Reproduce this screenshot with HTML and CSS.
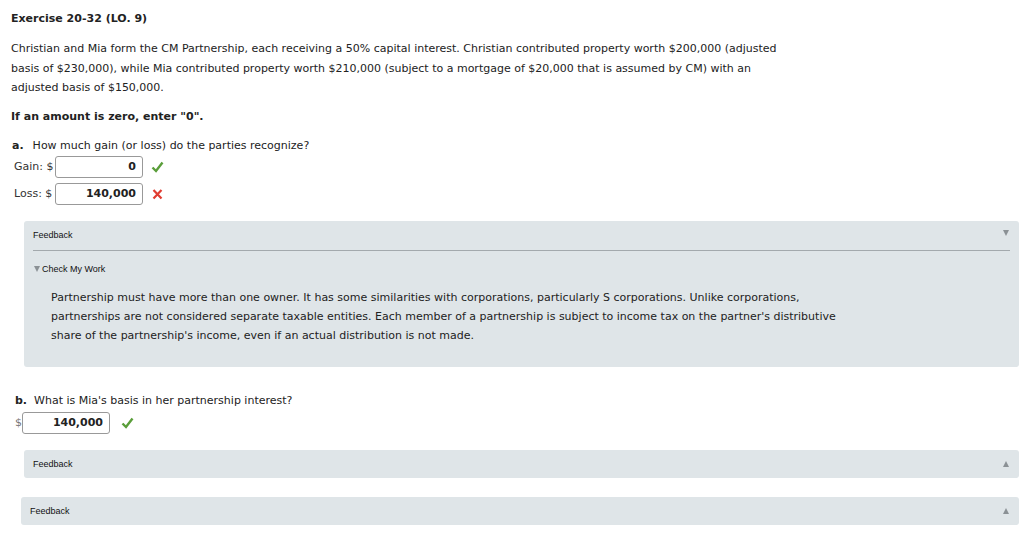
FILE: index.html
```html
<!DOCTYPE html>
<html>
<head>
<meta charset="utf-8">
<link rel="stylesheet" href="styles.css">
</head>
<body>
<div class="page">
  <div class="title">Exercise 20-32 (LO. 9)</div>
  <p class="intro">Christian and Mia form the CM Partnership, each receiving a 50% capital interest. Christian contributed property worth $200,000 (adjusted basis of $230,000), while Mia contributed property worth $210,000 (subject to a mortgage of $20,000 that is assumed by CM) with an adjusted basis of $150,000.</p>
  <p class="note">If an amount is zero, enter "0".</p>

  <div class="question qa"><b class="qlabel">a.</b>How much gain (or loss) do the parties recognize?</div>
  <div class="row row-gain">
    <span class="label">Gain: $</span><span class="input">0</span>
    <svg class="mark" width="13" height="12" viewBox="0 0 13 12"><path d="M1.5 6.5 L5 10 L11.5 1.5" fill="none" stroke="#5a9e3a" stroke-width="2.4"/></svg>
  </div>
  <div class="row row-loss">
    <span class="label">Loss: $</span><span class="input">140,000</span>
    <svg class="mark" width="13" height="12" viewBox="0 0 13 12"><path d="M2.5 2 L10.5 10.5 M10.5 2 L2.5 10.5" fill="none" stroke="#e03c31" stroke-width="2.2"/></svg>
  </div>

  <div class="feedback open">
    <div class="fb-head"><span>Feedback</span><span class="tri down"></span></div>
    <div class="fb-sub"><span class="tri small-down"></span>Check My Work</div>
    <p class="fb-text">Partnership must have more than one owner. It has some similarities with corporations, particularly S corporations. Unlike corporations, partnerships are not considered separate taxable entities. Each member of a partnership is subject to income tax on the partner's distributive share of the partnership's income, even if an actual distribution is not made.</p>
  </div>

  <div class="question qb"><b class="qlabel">b.</b>What is Mia's basis in her partnership interest?</div>
  <div class="row row-b">
    <span class="label dollar">$</span><span class="input">140,000</span>
    <svg class="mark" width="13" height="12" viewBox="0 0 13 12"><path d="M1.5 6.5 L5 10 L11.5 1.5" fill="none" stroke="#5a9e3a" stroke-width="2.4"/></svg>
  </div>

  <div class="feedback closed fb2">
    <div class="fb-head"><span>Feedback</span><span class="tri up"></span></div>
  </div>
  <div class="feedback closed fb3">
    <div class="fb-head"><span>Feedback</span><span class="tri up"></span></div>
  </div>
</div>
</body>
</html>
```
FILE: styles.css
```css
html, body {
  margin: 0;
  padding: 0;
  background: #fff;
}
.page {
  font-family: "DejaVu Sans", Verdana, sans-serif;
  font-size: 11px;
  color: #222;
  padding: 11px 5px 0 11px;
}
.title {
  font-weight: bold;
  line-height: 16px;
  margin-bottom: 12px;
}
.intro {
  margin: 0;
  line-height: 19.5px;
  width: 780px;
}
.note {
  font-weight: bold;
  margin: 9px 0 0;
  line-height: 19px;
}
.question {
  line-height: 19px;
}
.qlabel {
  margin-right: 9px;
}
.qa {
  margin-top: 10px;
  padding-left: 1px;
}
.row {
  display: flex;
  align-items: center;
  height: 22px;
}
.row-gain { margin-top: 1px; }
.row-loss { margin-top: 5px; margin-left: 3px; }
.label {
  width: 41px;
  color: #333;
  padding-left: 3px;
}
.row-loss .label { width: 41px; padding-left: 0; }
.input {
  box-sizing: border-box;
  width: 88px;
  height: 22px;
  border: 1px solid #999;
  border-radius: 3px;
  text-align: right;
  font-weight: bold;
  line-height: 20px;
  padding-right: 6px;
  background: #fff;
}
.mark {
  margin-left: 8px;
}
.feedback {
  background: #dfe5e8;
  border-radius: 3px;
  font-family: "Liberation Sans", Arial, sans-serif;
  font-size: 9px;
  color: #111;
  margin-left: 13px;
  margin-right: 0;
}
.feedback.open {
  margin-top: 16px;
  height: 146px;
  padding: 0 9px;
}
.fb-head {
  display: flex;
  justify-content: space-between;
  align-items: center;
  height: 29px;
}
.open .fb-head {
  border-bottom: 1px solid #a3a9ad;
}
.fb-sub {
  margin-top: 12px;
  line-height: 12px;
  display: flex;
  align-items: center;
  padding-left: 1px;
}
.fb-text {
  font-family: "DejaVu Sans", Verdana, sans-serif;
  font-size: 11px;
  color: #222;
  margin: 13px 0 0 18px;
  line-height: 19px;
  width: 800px;
}
.tri {
  width: 0;
  height: 0;
  border-left: 3.5px solid transparent;
  border-right: 3.5px solid transparent;
  margin-right: 1px;
}
.tri.down {
  border-top: 6px solid #8b9195;
  margin-top: -4px;
}
.tri.up {
  border-bottom: 6px solid #8b9195;
}
.tri.small-down {
  border-top: 6px solid #8b9195;
  border-left-width: 3px;
  border-right-width: 3px;
  margin-right: 2px;
}
.qb {
  margin-top: 24px;
  padding-left: 4px;
}
.qb .qlabel { margin-right: 7px; }
.row-b {
  margin-top: 2px;
  margin-left: 4px;
}
.label.dollar {
  width: 7px;
  padding-left: 0;
  color: #777;
}
.row-b .input { width: 88px; }
.row-b .mark { margin-left: 11px; }
.feedback.closed {
  padding: 0 9px;
}
.feedback.closed .fb-head { height: 28px; }
.fb2 { margin-top: 16px; }
.fb3 { margin-top: 19px; margin-left: 10px; padding-left: 9px; }
```
